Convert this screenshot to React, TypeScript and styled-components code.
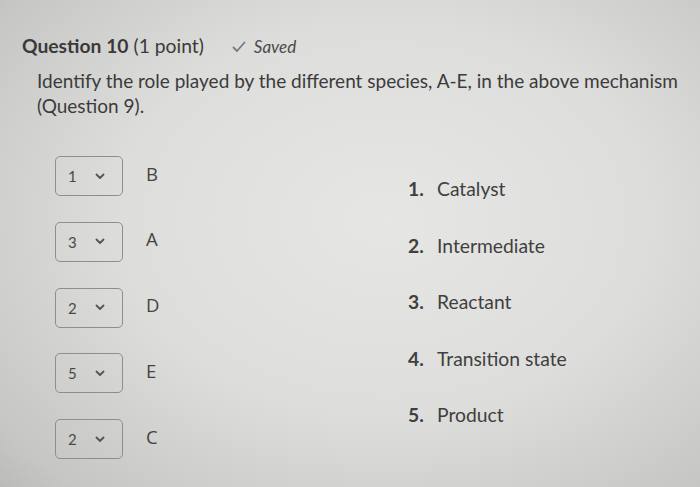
import React from "react";
import styled, { createGlobalStyle } from "styled-components";

const Global = createGlobalStyle`
  html, body { margin: 0; padding: 0; }
  body {
    width: 700px;
    height: 487px;
    overflow: hidden;
    font-family: Lato, "Open Sans", sans-serif;
    color: #3c3c3c;
  }
`;

const Page = styled.div`
  width: 700px;
  height: 487px;
  box-sizing: border-box;
  padding: 34px 0 0 22px;
  background: radial-gradient(ellipse 85% 90% at 55% 45%, #e6e6e4 0%, #dddddb 45%, #c6c7c4 80%, #adaeaa 100%);
  display: flex;
  flex-direction: column;
`;

const Header = styled.div`
  display: flex;
  align-items: baseline;
  height: 24px;
  line-height: 24px;
`;

const Title = styled.span`
  font-size: 19.3px;
  font-weight: 700;
  color: #3a3a3a;
`;

const Points = styled.span`
  font-size: 19.3px;
  font-weight: 400;
  margin-left: 5px;
  color: #3a3a3a;
`;

const Saved = styled.span`
  display: inline-flex;
  align-items: center;
  margin-left: 28px;
  font-size: 17px;
  font-style: italic;
  color: #4a4a4a;
  gap: 8px;
`;

const Prompt = styled.p`
  margin: 10px 0 0 15px;
  font-size: 19px;
  line-height: 25px;
  color: #3b3b3b;
  width: 650px;
`;

const Content = styled.div`
  display: flex;
  margin-top: 38px;
`;

const LeftCol = styled.div`
  display: flex;
  flex-direction: column;
  gap: 25.75px;
  margin-left: 33px;
  width: 353px;
`;

const MatchRow = styled.div`
  display: flex;
  align-items: center;
  gap: 23px;
`;

const Select = styled.div`
  box-sizing: border-box;
  width: 68px;
  height: 40px;
  border: 1.5px solid #8e8e8c;
  border-radius: 5px;
  display: flex;
  align-items: center;
  padding: 0 0 0 12px;
  gap: 18px;
  font-size: 15px;
  color: #4a4a4a;
`;

const Letter = styled.span`
  font-size: 18.5px;
  color: #444;
  font-family: "Open Sans", Lato, sans-serif;
  margin-top: -6px;
`;

const RightList = styled.ol`
  list-style: none;
  margin: 20px 0 0 0;
  padding: 0;
  display: flex;
  flex-direction: column;
  gap: 31.5px;
`;

const Item = styled.li`
  display: flex;
  align-items: baseline;
  height: 25px;
  line-height: 25px;
  font-size: 19.3px;
  color: #3f3f3f;
`;

const Num = styled.span`
  width: 29px;
  font-weight: 700;
  color: #404040;
`;

const Check = () => (
  <svg width="14" height="12" viewBox="0 0 14 12">
    <path d="M1.5 6.5 L5 10 L12.5 1.5" fill="none" stroke="#7a7a7a" strokeWidth="1.8" strokeLinecap="round" strokeLinejoin="round" />
  </svg>
);

const Chevron = () => (
  <svg width="10" height="7" viewBox="0 0 10 7">
    <path d="M1.5 1.5 L5 5 L8.5 1.5" fill="none" stroke="#555" strokeWidth="1.8" strokeLinecap="round" strokeLinejoin="round" />
  </svg>
);

const matches = [
  { v: "1", l: "B" },
  { v: "3", l: "A" },
  { v: "2", l: "D" },
  { v: "5", l: "E" },
  { v: "2", l: "C" },
];

const options = ["Catalyst", "Intermediate", "Reactant", "Transition state", "Product"];

export default function App() {
  return (
    <>
      <Global />
      <Page>
        <Header>
          <Title>Question 10</Title>
          <Points>(1 point)</Points>
          <Saved>
            <Check />
            Saved
          </Saved>
        </Header>
        <Prompt>
          Identify the role played by the different species, A-E, in the above mechanism (Question 9).
        </Prompt>
        <Content>
          <LeftCol>
            {matches.map((m, i) => (
              <MatchRow key={i}>
                <Select>
                  <span>{m.v}</span>
                  <Chevron />
                </Select>
                <Letter>{m.l}</Letter>
              </MatchRow>
            ))}
          </LeftCol>
          <RightList>
            {options.map((o, i) => (
              <Item key={o}>
                <Num>{i + 1}.</Num>
                <span>{o}</span>
              </Item>
            ))}
          </RightList>
        </Content>
      </Page>
    </>
  );
}
